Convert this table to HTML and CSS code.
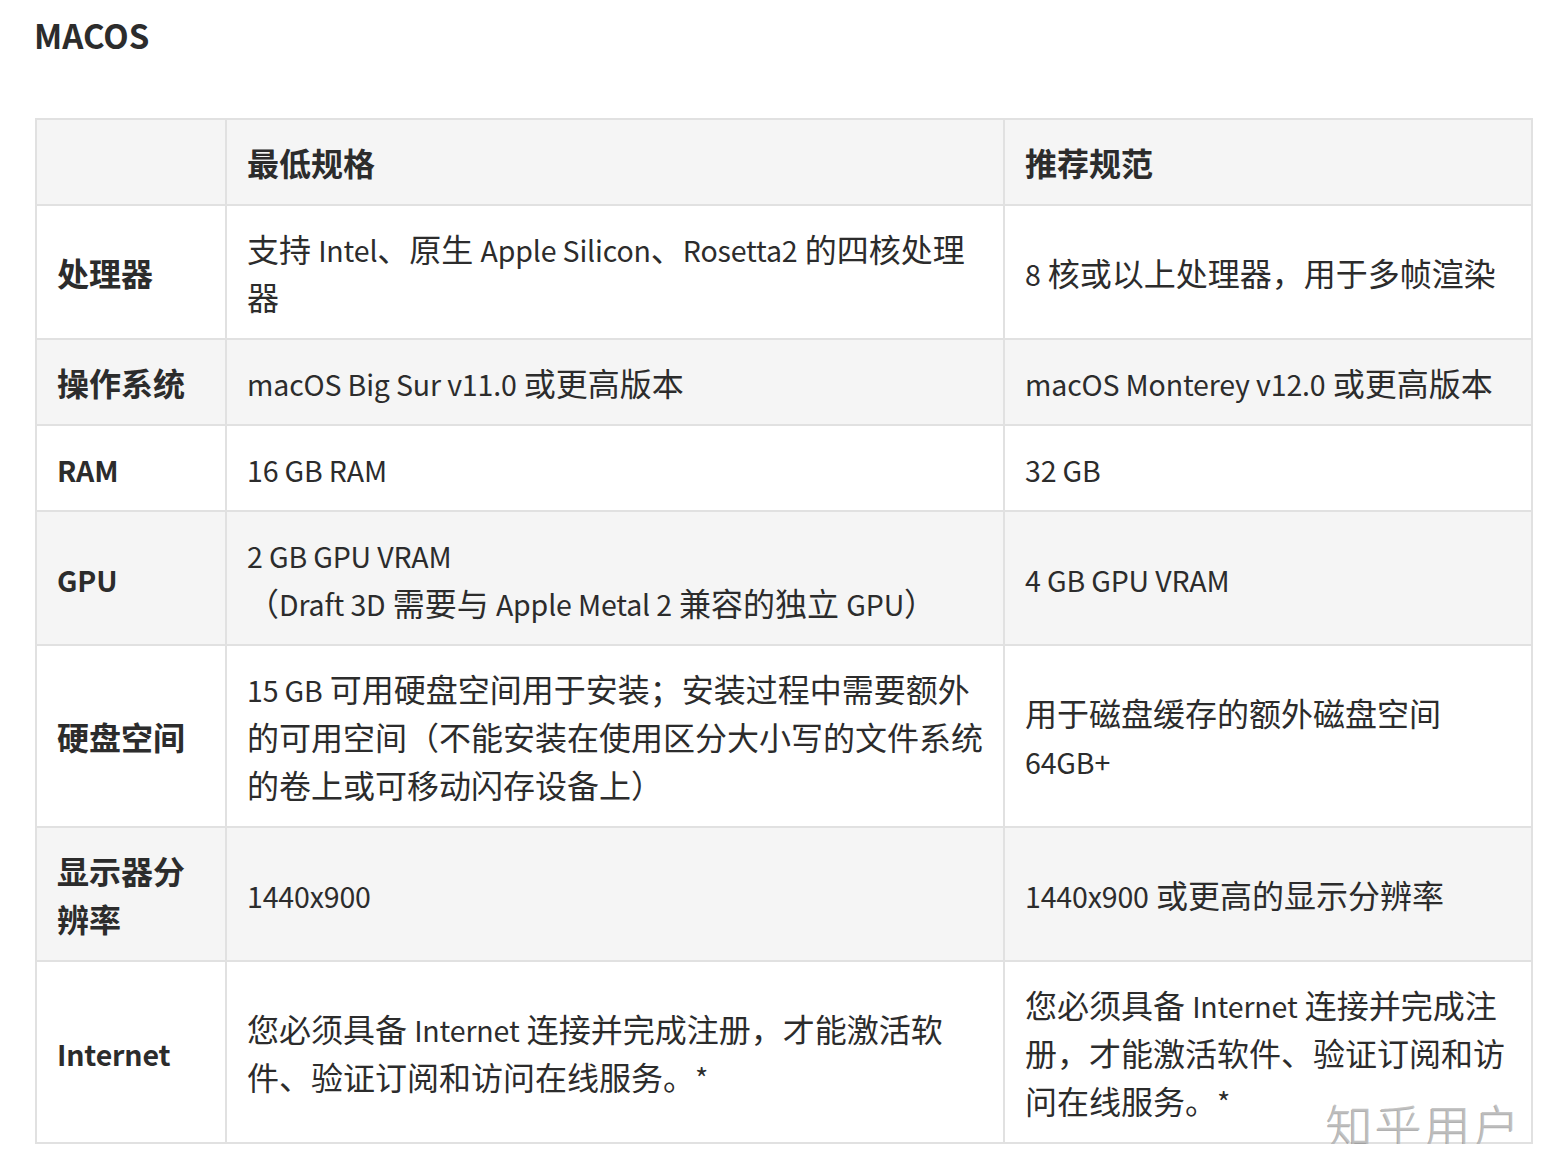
FILE: index.html
```html
<!DOCTYPE html>
<html lang="zh-CN">
<head>
<meta charset="utf-8">
<title>MACOS</title>
<link rel="stylesheet" href="styles.css">
</head>
<body>
<main class="page">
  <h2 class="title">MACOS</h2>
  <div class="table-wrap">
    <table class="spec">
      <colgroup>
        <col class="c1">
        <col class="c2">
        <col class="c3">
      </colgroup>
      <thead>
        <tr>
          <th></th>
          <th>最低规格</th>
          <th>推荐规范</th>
        </tr>
      </thead>
      <tbody>
        <tr>
          <th>处理器</th>
          <td>支持 <span class="en">Intel</span>、原生 <span class="en">Apple Silicon</span>、<span class="en">Rosetta2</span> 的四核处理器</td>
          <td><span class="en">8</span> 核或以上处理器，用于多帧渲染</td>
        </tr>
        <tr>
          <th>操作系统</th>
          <td><span class="en">macOS Big Sur v11.0</span> 或更高版本</td>
          <td><span class="en">macOS Monterey v12.0</span> 或更高版本</td>
        </tr>
        <tr>
          <th><span class="en">RAM</span></th>
          <td><span class="en">16 GB RAM</span></td>
          <td><span class="en">32 GB</span></td>
        </tr>
        <tr>
          <th><span class="en">GPU</span></th>
          <td><span class="en">2 GB GPU VRAM</span><br>（<span class="en">Draft 3D</span> 需要与 <span class="en">Apple Metal 2</span> 兼容的独立 <span class="en">GPU</span>）</td>
          <td><span class="en">4 GB GPU VRAM</span></td>
        </tr>
        <tr>
          <th>硬盘空间</th>
          <td><span class="en">15 GB</span> 可用硬盘空间用于安装；安装过程中需要额外的可用空间（不能安装在使用区分大小写的文件系统的卷上或可移动闪存设备上）</td>
          <td>用于磁盘缓存的额外磁盘空间 <span class="en">64GB+</span></td>
        </tr>
        <tr>
          <th>显示器分辨率</th>
          <td><span class="en">1440x900</span></td>
          <td><span class="en">1440x900</span> 或更高的显示分辨率</td>
        </tr>
        <tr>
          <th><span class="en">Internet</span></th>
          <td>您必须具备 <span class="en">Internet</span> 连接并完成注册，才能激活软件、验证订阅和访问在线服务。<span class="en">*</span></td>
          <td>您必须具备 <span class="en">Internet</span> 连接并完成注册，才能激活软件、验证订阅和访问在线服务。<span class="en">*</span></td>
        </tr>
      </tbody>
    </table>
    <div class="watermark">知乎用户</div>
  </div>
</main>
</body>
</html>
```

FILE: styles.css
```css
html, body {
  margin: 0;
  padding: 0;
  background: #ffffff;
}

body {
  font-family: "Noto Sans CJK SC", "Noto Sans", sans-serif;
  color: #2c2c2c;
}

.page {
  padding: 13px 33px 0 35px;
}

.title {
  margin: 0 0 0 -1px;
  font-size: 33px;
  line-height: 44px;
  font-weight: 700;
  color: #2c2c2c;
}

.table-wrap {
  position: relative;
  margin-top: 61px;
  width: 1496px;
}

.spec {
  width: 1496px;
  border-collapse: collapse;
  table-layout: fixed;
  font-size: 32px;
  line-height: 48px;
}

.c1 { width: 190px; }
.c2 { width: 778px; }
.c3 { width: 528px; }

.spec th,
.spec td {
  border: 2px solid #e1e1e1;
  padding: 18px 20px;
  text-align: left;
  vertical-align: middle;
}

.spec th {
  font-weight: 700;
  color: #2c2c2c;
}

.spec td {
  font-weight: 400;
  color: #2c2c2c;
}

.en {
  font-size: 28.5px;
  line-height: 1;
  letter-spacing: -0.15px;
}

.spec thead tr {
  background: #f5f5f5;
}

.spec tbody tr:nth-child(even) {
  background: #f5f5f5;
}

.spec tbody tr:nth-child(odd) {
  background: #ffffff;
}

.watermark {
  position: absolute;
  right: 9px;
  bottom: -3px;
  font-family: "Noto Sans CJK SC", sans-serif;
  font-weight: 300;
  font-size: 47px;
  line-height: 47px;
  letter-spacing: 2px;
  color: rgba(190, 190, 190, 0.9);
  text-shadow: -1px 1px 0 rgba(100, 100, 100, 0.5);
  pointer-events: none;
}
```
